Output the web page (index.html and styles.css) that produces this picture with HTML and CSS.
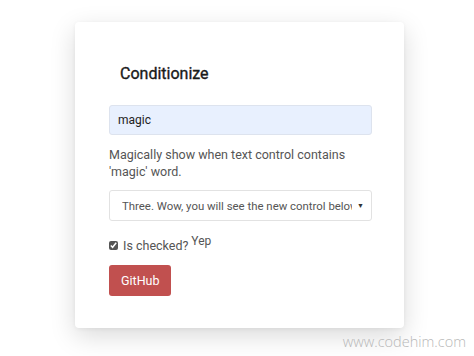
FILE: index.html
```html
<!DOCTYPE html>
<html>
<head>
<meta charset="utf-8">
<link rel="stylesheet" href="styles.css">
</head>
<body>
<div class="page">
  <div class="card">
    <h1 class="title">Conditionize</h1>
    <input class="text-input" type="text" value="magic">
    <p class="desc">Magically show when text control contains 'magic' word.</p>
    <div class="select">
      <span class="select-text">Three. Wow, you will see the new control below</span>
      <span class="select-arrow">&#9660;</span>
    </div>
    <div class="check-row">
      <input class="check" type="checkbox" checked>
      <span class="check-label">Is checked?</span>
      <span class="yep">Yep</span>
    </div>
    <button class="btn">GitHub</button>
  </div>
  <div class="watermark">www.codehim.com</div>
</div>
</body>
</html>
```
FILE: styles.css
```css
html, body {
  margin: 0;
  padding: 0;
  background: #ffffff;
}
body {
  width: 474px;
  height: 356px;
  overflow: hidden;
  font-family: Roboto, "Liberation Sans", Arial, sans-serif;
}
.page {
  position: relative;
  padding: 22px 0 0 75px;
}
.card {
  box-sizing: border-box;
  width: 329px;
  height: 306px;
  background: #fff;
  border-radius: 4px;
  box-shadow: 0 8px 26px rgba(0,0,0,0.15), 0 1px 4px rgba(0,0,0,0.05);
  padding: 0 32px 0 34px;
  display: flex;
  flex-direction: column;
  align-items: flex-start;
}
.title {
  margin: 42px 0 0 11px;
  font-size: 16px;
  font-weight: 400;
  -webkit-text-stroke: 0.35px #1a1a1a;
  color: #1a1a1a;
  line-height: 20px;
}
.text-input {
  box-sizing: border-box;
  margin-top: 21px;
  width: 263px;
  height: 30px;
  border: 1px solid #dde3ee;
  border-radius: 3px;
  background: #e8f0fe;
  padding: 0 8px;
  font-family: Roboto, "Liberation Sans", Arial, sans-serif;
  font-size: 12px;
  color: #222;
  outline: none;
}
.desc {
  margin: 11px 0 0 0;
  font-size: 12.5px;
  line-height: 17px;
  color: #555;
  width: 263px;
}
.select {
  box-sizing: border-box;
  margin-top: 10px;
  width: 263px;
  height: 31px;
  border: 1px solid #e2e2e2;
  border-radius: 3px;
  display: flex;
  align-items: center;
  padding: 0 7px 0 12px;
  gap: 5px;
}
.select-text {
  flex: 1;
  overflow: hidden;
  white-space: nowrap;
  font-size: 11.4px;
  color: #555;
}
.select-arrow {
  font-size: 7px;
  color: #333;
}
.check-row {
  margin-top: 17px;
  display: flex;
  align-items: baseline;
}
.check {
  margin: 0 5px 0 0;
  width: 9px;
  height: 9px;
  accent-color: #555;
}
.check-label {
  font-size: 12.5px;
  color: #555;
}
.yep {
  font-size: 12px;
  color: #555;
  margin-left: 3px;
  position: relative;
  top: -5px;
}
.btn {
  margin-top: 12px;
  height: 31px;
  padding: 0 12px;
  border: none;
  border-radius: 3px;
  background: #c1504f;
  color: #fff;
  font-family: Roboto, "Liberation Sans", Arial, sans-serif;
  font-size: 12.5px;
}
.watermark {
  position: absolute;
  right: 8px;
  top: 332px;
  font-family: "Open Sans", "DejaVu Sans", sans-serif;
  font-weight: 300;
  font-size: 14.5px;
  color: #b8b8b8;
}
```
